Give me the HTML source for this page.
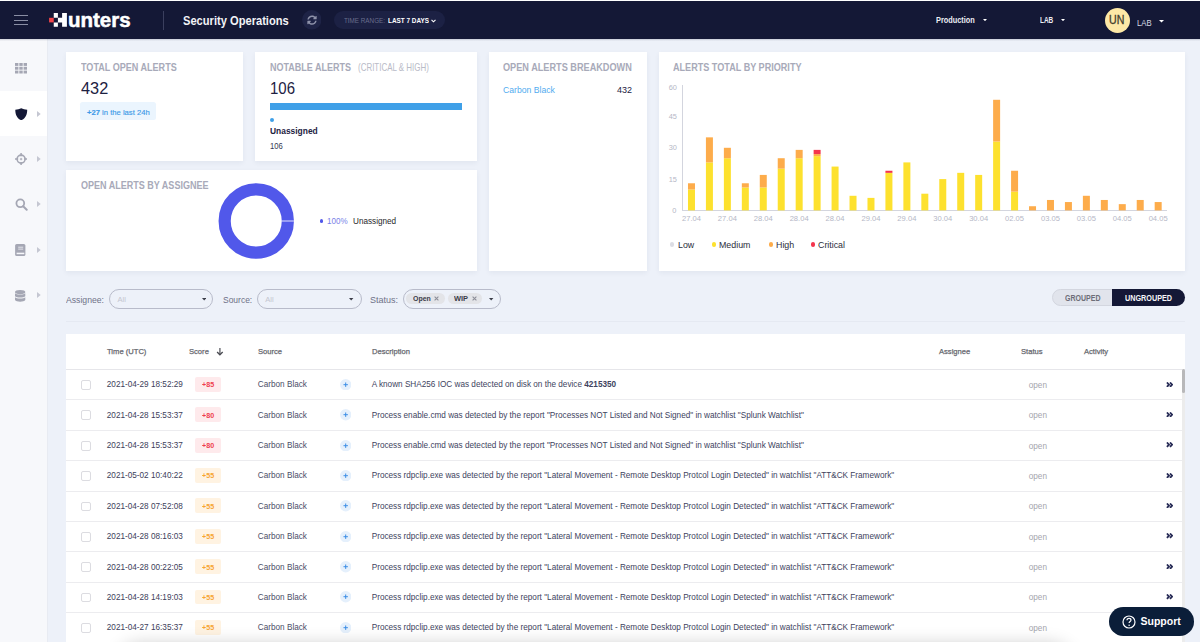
<!DOCTYPE html><html><head><meta charset="utf-8"><style>
*{margin:0;padding:0;box-sizing:border-box}
html,body{width:1200px;height:642px;overflow:hidden;background:#edf1f9;font-family:"Liberation Sans",sans-serif}
.t{position:absolute;white-space:nowrap;line-height:1}
.tb{-webkit-text-stroke:0.15px currentColor}
.a{position:absolute}
.card{position:absolute;background:#fff;box-shadow:0 2px 5px rgba(40,50,90,0.06)}
</style></head><body>
<div class="a" style="left:0;top:0;width:1200px;height:1px;background:#fff"></div>
<div class="a" style="left:0;top:1px;width:1200px;height:37.7px;background:#141836"></div>
<div class="a" style="left:14.3px;top:14.7px;width:14px;height:1.1px;background:#8a8ea4"></div>
<div class="a" style="left:14.3px;top:19.5px;width:14px;height:1.1px;background:#8a8ea4"></div>
<div class="a" style="left:14.3px;top:24.1px;width:14px;height:1.1px;background:#8a8ea4"></div>
<svg class="a" style="left:0;top:0" width="140" height="39" viewBox="0 0 140 39">
<rect x="49.1" y="17.8" width="4.65" height="4.6" fill="#f0444a"/>
<path d="M53.75 13.05 H57.9 V17.8 H53.75 Z M53.75 22.4 H57.9 V26.75 H53.75 Z M57.9 17.8 H62.1 V13.05 H66.9 V26.75 H62.1 V22.4 H57.9 Z" fill="#fff"/>
<text x="68.0" y="26.75" font-family="Liberation Sans" font-weight="bold" font-size="20" fill="#fff" stroke="#fff" stroke-width="0.5" textLength="62.6" lengthAdjust="spacingAndGlyphs">unters</text>
</svg>
<div class="a" style="left:163px;top:11px;width:1px;height:19px;background:#3b3f5e"></div>
<div class="t" style="left:183.2px;top:14px;font-size:13px;color:#f2f3f7;font-weight:bold;transform:scaleX(0.856);transform-origin:0 0;">Security Operations</div>
<svg class="a" style="left:301.9px;top:10.4px" width="19.6" height="19.6" viewBox="0 0 19.6 19.6">
<circle cx="9.8" cy="9.8" r="9.75" fill="#1e2346"/>
<g transform="translate(5.2 5.3) scale(0.0188)"><path fill="#8e92aa" d="M370.72 133.28C339.458 104.008 298.888 87.962 255.848 88c-77.458.068-144.328 53.178-162.791 126.85-1.344 5.363-6.122 9.150-11.651 9.150H24.103c-7.498 0-13.194-6.807-11.807-14.176C33.933 94.924 134.813 8 256 8c66.448 0 126.791 26.136 171.315 68.685L463.030 40.970C478.149 25.851 504 36.559 504 57.941V192c0 13.255-10.745 24-24 24H345.941c-21.382 0-32.090-25.851-16.971-40.971l41.750-41.749zM32 296h134.059c21.382 0 32.090 25.851 16.971 40.971l-41.750 41.750c31.262 29.273 71.835 45.319 114.876 45.280 77.418-.070 144.315-53.144 162.787-126.849 1.344-5.363 6.122-9.150 11.651-9.150h57.304c7.498 0 13.193 6.807 11.807 14.176C478.067 417.076 377.187 504 256 504c-66.448 0-126.791-26.136-171.315-68.685L48.970 471.030C33.851 486.149 8 475.441 8 454.059V320c0-13.255 10.745-24 24-24z"/></g>
</svg>
<div class="a" style="left:334px;top:11px;width:110.5px;height:18px;border-radius:9px;background:#1c2144"></div>
<div class="t" style="left:344px;top:17px;font-size:7.8px;color:#6a6e8c;font-weight:normal;transform:scaleX(0.809);transform-origin:0 0;">TIME RANGE:</div>
<div class="t" style="left:388px;top:17px;font-size:7.8px;color:#ffffff;font-weight:bold;transform:scaleX(0.82);transform-origin:0 0;">LAST 7 DAYS</div>
<svg class="a" style="left:431px;top:18.5px" width="5" height="4" viewBox="0 0 5 4"><path d="M0.5 0.8 L2.5 2.8 L4.5 0.8" fill="none" stroke="#fff" stroke-width="1.1"/></svg>
<div class="t" style="left:935.6px;top:17px;font-size:8.2px;color:#eceef4;font-weight:bold;transform:scaleX(0.897);transform-origin:0 0;">Production</div>
<svg class="a" style="left:982.7px;top:19.3px" width="4" height="2.2" viewBox="0 0 4 2.2"><path d="M0 0 L4 0 L2 2.2 Z" fill="#fff"/></svg>
<div class="t" style="left:1039.7px;top:17px;font-size:8.2px;color:#eceef4;font-weight:bold;transform:scaleX(0.786);transform-origin:0 0;">LAB</div>
<svg class="a" style="left:1061px;top:19.3px" width="4" height="2.2" viewBox="0 0 4 2.2"><path d="M0 0 L4 0 L2 2.2 Z" fill="#fff"/></svg>
<div class="a" style="left:1104.7px;top:7.5px;width:25.4px;height:25.4px;border-radius:50%;background:#fde8a6"></div>
<div class="t" style="left:1108.9px;top:14px;font-size:12px;color:#3f3b2b;font-weight:normal;transform:scaleX(0.886);transform-origin:0 0;-webkit-text-stroke:0.3px #3f3b2b;">UN</div>
<div class="t" style="left:1136.6px;top:18px;font-size:9.8px;color:#d8dae4;font-weight:normal;transform:scaleX(0.791);transform-origin:0 0;">LAB</div>
<svg class="a" style="left:1159px;top:20.2px" width="5" height="2.6" viewBox="0 0 5 2.6"><path d="M0 0 L5 0 L2.5 2.6 Z" fill="#fff"/></svg>
<div class="a" style="left:0;top:38.5px;width:46.5px;height:604px;background:#f7f8fb;box-shadow:1px 0 0 #e8ebf2"></div>
<div class="a" style="left:0;top:90.7px;width:46.5px;height:45.3px;background:#fff"></div>
<div class="a" style="left:0;top:38.7px;width:1200px;height:2px;background:linear-gradient(rgba(20,24,54,0.18),rgba(20,24,54,0))"></div>
<svg class="a" style="left:0;top:0" width="47" height="80"><rect x="15.0" y="63.0" width="3.4" height="2.9" fill="#a5a7b4"/><rect x="19.3" y="63.0" width="3.4" height="2.9" fill="#a5a7b4"/><rect x="23.6" y="63.0" width="3.4" height="2.9" fill="#a5a7b4"/><rect x="15.0" y="66.8" width="3.4" height="2.9" fill="#a5a7b4"/><rect x="19.3" y="66.8" width="3.4" height="2.9" fill="#a5a7b4"/><rect x="23.6" y="66.8" width="3.4" height="2.9" fill="#a5a7b4"/><rect x="15.0" y="70.6" width="3.4" height="2.9" fill="#a5a7b4"/><rect x="19.3" y="70.6" width="3.4" height="2.9" fill="#a5a7b4"/><rect x="23.6" y="70.6" width="3.4" height="2.9" fill="#a5a7b4"/></svg>
<svg class="a" style="left:15px;top:107.9px" width="12.5" height="12.5" viewBox="0 0 12.5 12.5"><path d="M6.25 0.3 C4.5 1.2 2.5 1.6 0.3 1.7 C0.3 6.5 1.8 10.2 6.25 12.3 C10.7 10.2 12.2 6.5 12.2 1.7 C10 1.6 8 1.2 6.25 0.3 Z" fill="#141836"/></svg>
<svg class="a" style="left:37px;top:110.6px" width="4" height="6" viewBox="0 0 4 6"><path d="M0 0 L3.7 3 L0 6 Z" fill="#c5c7d2"/></svg>
<svg class="a" style="left:15px;top:153.2px" width="12.2" height="12.2" viewBox="0 0 12.2 12.2"><circle cx="6.1" cy="6.1" r="4" fill="none" stroke="#a5a7b4" stroke-width="1.6"/><path d="M6.1 0 V3.2 M6.1 9 V12.2 M0 6.1 H3.2 M9 6.1 H12.2" stroke="#a5a7b4" stroke-width="1.5"/><path d="M6.1 4.9 V7.3 M4.9 6.1 H7.3" stroke="#a5a7b4" stroke-width="0.9"/></svg>
<svg class="a" style="left:37px;top:156px" width="4" height="6" viewBox="0 0 4 6"><path d="M0 0 L3.7 3 L0 6 Z" fill="#c5c7d2"/></svg>
<svg class="a" style="left:15px;top:198px" width="13" height="13" viewBox="0 0 13 13"><circle cx="5.3" cy="5.3" r="3.9" fill="none" stroke="#a5a7b4" stroke-width="1.8"/><path d="M8.2 8.2 L11.7 11.7" stroke="#a5a7b4" stroke-width="2" stroke-linecap="round"/></svg>
<svg class="a" style="left:37px;top:201.2px" width="4" height="6" viewBox="0 0 4 6"><path d="M0 0 L3.7 3 L0 6 Z" fill="#c5c7d2"/></svg>
<svg class="a" style="left:15px;top:244.3px" width="11" height="12.2" viewBox="0 0 11 12.2"><rect x="0.1" y="0" width="10.3" height="12" rx="1.6" fill="#a5a7b4"/><rect x="3.2" y="2.7" width="5" height="1" fill="#e4e5ec"/><rect x="3.2" y="4.6" width="5" height="1" fill="#e4e5ec"/><rect x="1.6" y="8.7" width="7.7" height="1.5" fill="#f7f8fb"/></svg>
<svg class="a" style="left:37px;top:246.5px" width="4" height="6" viewBox="0 0 4 6"><path d="M0 0 L3.7 3 L0 6 Z" fill="#c5c7d2"/></svg>
<svg class="a" style="left:15px;top:289.5px" width="11" height="12.2" viewBox="0 0 11 12.2"><ellipse cx="5.15" cy="2.1" rx="5.15" ry="2.1" fill="#a5a7b4"/><path d="M0 3.3 C1.2 5 9.1 5 10.3 3.3 V6.2 C9.1 7.9 1.2 7.9 0 6.2 Z" fill="#a5a7b4"/><path d="M0 7.3 C1.2 9 9.1 9 10.3 7.3 V10.1 C9.1 12.2 1.2 12.2 0 10.1 Z" fill="#a5a7b4"/></svg>
<svg class="a" style="left:37px;top:292px" width="4" height="6" viewBox="0 0 4 6"><path d="M0 0 L3.7 3 L0 6 Z" fill="#c5c7d2"/></svg>
<div class="card" style="left:66px;top:51.7px;width:177px;height:109.3px"></div>
<div class="card" style="left:255px;top:51.7px;width:222px;height:109.3px"></div>
<div class="card" style="left:66px;top:170px;width:411px;height:101px"></div>
<div class="card" style="left:489px;top:51.7px;width:158px;height:219.3px"></div>
<div class="card" style="left:659px;top:51.7px;width:526px;height:219.3px"></div>
<div class="t" style="left:80.9px;top:63px;font-size:10.3px;color:#a8aab9;font-weight:bold;transform:scaleX(0.879);transform-origin:0 0;">TOTAL OPEN ALERTS</div>
<div class="t" style="left:80.9px;top:80px;font-size:17px;color:#1d2142;font-weight:normal;transform:scaleX(0.959);transform-origin:0 0;">432</div>
<div class="a" style="left:80.4px;top:102.4px;width:75.7px;height:17.8px;border-radius:2.5px;background:#ebf5fe"></div>
<div class="t" style="left:86.9px;top:109px;font-size:7.8px;color:#3e9ae8;font-weight:normal;transform:scaleX(0.98);transform-origin:0 0;-webkit-text-stroke:0.15px #3e9ae8;"><b>+27</b> in the last 24h</div>
<div class="t" style="left:270px;top:63px;font-size:10.3px;color:#a8aab9;font-weight:bold;transform:scaleX(0.874);transform-origin:0 0;">NOTABLE ALERTS</div>
<div class="t" style="left:358px;top:63px;font-size:10.3px;color:#b9bbc7;font-weight:normal;transform:scaleX(0.773);transform-origin:0 0;">(CRITICAL &amp; HIGH)</div>
<div class="t" style="left:270px;top:80px;font-size:16.5px;color:#1d2142;font-weight:normal;transform:scaleX(0.908);transform-origin:0 0;">106</div>
<div class="a" style="left:270px;top:102.8px;width:192.1px;height:7px;background:#3fa0e8"></div>
<div class="a" style="left:270px;top:117.7px;width:4.2px;height:4.2px;border-radius:50%;background:#3fa0e8"></div>
<div class="t" style="left:270px;top:127px;font-size:9.2px;color:#1d2142;font-weight:bold;transform:scaleX(0.916);transform-origin:0 0;">Unassigned</div>
<div class="t" style="left:270px;top:142px;font-size:9px;color:#333650;font-weight:normal;transform:scaleX(0.849);transform-origin:0 0;">106</div>
<div class="t" style="left:80.5px;top:181px;font-size:10.3px;color:#a8aab9;font-weight:bold;transform:scaleX(0.876);transform-origin:0 0;">OPEN ALERTS BY ASSIGNEE</div>
<svg class="a" style="left:216px;top:181px" width="80" height="80" viewBox="0 0 80 80"><circle cx="40.25" cy="40" r="31.6" fill="none" stroke="#5158ea" stroke-width="12.2"/><rect x="65" y="39.5" width="13" height="1" fill="#dfe0fb"/></svg>
<div class="a" style="left:320px;top:219.3px;width:3.4px;height:3.4px;border-radius:50%;background:#5158ea"></div>
<div class="t" style="left:327px;top:217px;font-size:9px;color:#7a7fe8;font-weight:normal;transform:scaleX(0.895);transform-origin:0 0;">100%</div>
<div class="t" style="left:352.7px;top:217px;font-size:9px;color:#1f1f2a;font-weight:normal;transform:scaleX(0.907);transform-origin:0 0;">Unassigned</div>
<div class="t" style="left:503.1px;top:63px;font-size:10.3px;color:#a8aab9;font-weight:bold;transform:scaleX(0.889);transform-origin:0 0;">OPEN ALERTS BREAKDOWN</div>
<div class="t" style="left:503.1px;top:86px;font-size:9px;color:#52acef;font-weight:normal;transform:scaleX(0.96);transform-origin:0 0;">Carbon Black</div>
<div class="t" style="left:616.9px;top:86px;font-size:9px;color:#1d2142;font-weight:normal;">432</div>
<div class="t" style="left:673.4px;top:63px;font-size:10.3px;color:#a8aab9;font-weight:bold;transform:scaleX(0.882);transform-origin:0 0;">ALERTS TOTAL BY PRIORITY</div>
<div class="a" style="left:682px;top:84.7px;width:1px;height:126.3px;background:#d3d5de"></div>
<div class="a" style="left:682px;top:210.1px;width:485.2px;height:1.1px;background:#d3d5de"></div>
<div class="t" style="left:672.3px;top:207px;font-size:7.4px;color:#b5b7c6;font-weight:normal;">0</div>
<div class="t" style="left:668.7px;top:176px;font-size:7.4px;color:#b5b7c6;font-weight:normal;">15</div>
<div class="t" style="left:668.7px;top:144px;font-size:7.4px;color:#b5b7c6;font-weight:normal;">30</div>
<div class="t" style="left:668.7px;top:113px;font-size:7.4px;color:#b5b7c6;font-weight:normal;">45</div>
<div class="t" style="left:668.7px;top:84px;font-size:7.4px;color:#b5b7c6;font-weight:normal;">60</div>
<svg class="a" style="left:650px;top:80px" width="530" height="135"><rect x="37.98" y="109.53" width="7" height="20.87" fill="#fde12e"/><rect x="37.98" y="103.27" width="7" height="6.26" fill="#fdac4b"/><rect x="55.92" y="82.40" width="7" height="48.00" fill="#fde12e"/><rect x="55.92" y="57.35" width="7" height="25.04" fill="#fdac4b"/><rect x="73.88" y="78.22" width="7" height="52.18" fill="#fde12e"/><rect x="73.88" y="67.79" width="7" height="10.44" fill="#fdac4b"/><rect x="91.83" y="107.44" width="7" height="22.96" fill="#fde12e"/><rect x="91.83" y="103.27" width="7" height="4.17" fill="#fdac4b"/><rect x="109.77" y="107.44" width="7" height="22.96" fill="#fde12e"/><rect x="109.77" y="94.92" width="7" height="12.52" fill="#fdac4b"/><rect x="127.73" y="88.66" width="7" height="41.74" fill="#fde12e"/><rect x="127.73" y="78.22" width="7" height="10.44" fill="#fdac4b"/><rect x="145.67" y="78.22" width="7" height="52.18" fill="#fde12e"/><rect x="145.67" y="69.88" width="7" height="8.35" fill="#fdac4b"/><rect x="163.62" y="76.14" width="7" height="54.26" fill="#fde12e"/><rect x="163.62" y="74.05" width="7" height="2.09" fill="#fdac4b"/><rect x="163.62" y="69.88" width="7" height="4.17" fill="#f4354d"/><rect x="181.58" y="86.57" width="7" height="43.83" fill="#fde12e"/><rect x="199.52" y="115.79" width="7" height="14.61" fill="#fde12e"/><rect x="217.48" y="117.88" width="7" height="12.52" fill="#fde12e"/><rect x="235.42" y="92.83" width="7" height="37.57" fill="#fde12e"/><rect x="235.42" y="90.75" width="7" height="2.09" fill="#f4354d"/><rect x="253.38" y="82.40" width="7" height="48.00" fill="#fde12e"/><rect x="271.33" y="113.70" width="7" height="16.70" fill="#fde12e"/><rect x="289.27" y="99.09" width="7" height="31.31" fill="#fde12e"/><rect x="307.22" y="92.83" width="7" height="37.57" fill="#fde12e"/><rect x="325.17" y="94.92" width="7" height="35.48" fill="#fde12e"/><rect x="343.12" y="61.53" width="7" height="68.87" fill="#fde12e"/><rect x="343.12" y="19.79" width="7" height="41.74" fill="#fdac4b"/><rect x="361.08" y="111.62" width="7" height="18.78" fill="#fde12e"/><rect x="361.08" y="90.75" width="7" height="20.87" fill="#fdac4b"/><rect x="379.03" y="126.23" width="7" height="4.17" fill="#fdac4b"/><rect x="396.97" y="119.97" width="7" height="10.44" fill="#fdac4b"/><rect x="414.92" y="122.05" width="7" height="8.35" fill="#fdac4b"/><rect x="432.88" y="115.79" width="7" height="14.61" fill="#fdac4b"/><rect x="450.83" y="119.97" width="7" height="10.44" fill="#fdac4b"/><rect x="468.78" y="124.14" width="7" height="6.26" fill="#fdac4b"/><rect x="486.72" y="119.97" width="7" height="10.44" fill="#fdac4b"/><rect x="504.67" y="122.05" width="7" height="8.35" fill="#fdac4b"/></svg>
<div class="t" style="left:671.48px;width:40px;text-align:center;top:215.18px;font-size:7.6px;color:#b5b7c6">27.04</div>
<div class="t" style="left:707.38px;width:40px;text-align:center;top:215.18px;font-size:7.6px;color:#b5b7c6">27.04</div>
<div class="t" style="left:743.27px;width:40px;text-align:center;top:215.18px;font-size:7.6px;color:#b5b7c6">28.04</div>
<div class="t" style="left:779.17px;width:40px;text-align:center;top:215.18px;font-size:7.6px;color:#b5b7c6">28.04</div>
<div class="t" style="left:815.08px;width:40px;text-align:center;top:215.18px;font-size:7.6px;color:#b5b7c6">28.04</div>
<div class="t" style="left:850.98px;width:40px;text-align:center;top:215.18px;font-size:7.6px;color:#b5b7c6">29.04</div>
<div class="t" style="left:886.88px;width:40px;text-align:center;top:215.18px;font-size:7.6px;color:#b5b7c6">29.04</div>
<div class="t" style="left:922.77px;width:40px;text-align:center;top:215.18px;font-size:7.6px;color:#b5b7c6">30.04</div>
<div class="t" style="left:958.67px;width:40px;text-align:center;top:215.18px;font-size:7.6px;color:#b5b7c6">30.04</div>
<div class="t" style="left:994.58px;width:40px;text-align:center;top:215.18px;font-size:7.6px;color:#b5b7c6">02.05</div>
<div class="t" style="left:1030.47px;width:40px;text-align:center;top:215.18px;font-size:7.6px;color:#b5b7c6">03.05</div>
<div class="t" style="left:1066.38px;width:40px;text-align:center;top:215.18px;font-size:7.6px;color:#b5b7c6">03.05</div>
<div class="t" style="left:1102.28px;width:40px;text-align:center;top:215.18px;font-size:7.6px;color:#b5b7c6">04.05</div>
<div class="t" style="left:1138.17px;width:40px;text-align:center;top:215.18px;font-size:7.6px;color:#b5b7c6">04.05</div>
<div class="a" style="left:670.2px;top:242.4px;width:4.2px;height:4.2px;border-radius:50%;background:#dcdde4"></div>
<div class="t" style="left:677.5px;top:241px;font-size:9.3px;color:#2b2d3a;font-weight:normal;transform:scaleX(0.95);transform-origin:0 0;">Low</div>
<div class="a" style="left:711.5px;top:242.4px;width:4.2px;height:4.2px;border-radius:50%;background:#fde12e"></div>
<div class="t" style="left:718.7px;top:241px;font-size:9.3px;color:#2b2d3a;font-weight:normal;transform:scaleX(0.95);transform-origin:0 0;">Medium</div>
<div class="a" style="left:768.5px;top:242.4px;width:4.2px;height:4.2px;border-radius:50%;background:#fdac4b"></div>
<div class="t" style="left:775.5px;top:241px;font-size:9.3px;color:#2b2d3a;font-weight:normal;transform:scaleX(0.95);transform-origin:0 0;">High</div>
<div class="a" style="left:811.2px;top:242.4px;width:4.2px;height:4.2px;border-radius:50%;background:#f4354d"></div>
<div class="t" style="left:818.3px;top:241px;font-size:9.3px;color:#2b2d3a;font-weight:normal;transform:scaleX(0.95);transform-origin:0 0;">Critical</div>
<div class="t" style="left:66.2px;top:295px;font-size:9.8px;color:#6f7288;font-weight:normal;transform:scaleX(0.883);transform-origin:0 0;">Assignee:</div>
<div class="a" style="left:109.2px;top:289px;width:104.10000000000001px;height:19.7px;border:1px solid #b8bbca;border-radius:10px"></div>
<div class="t" style="left:117.5px;top:296px;font-size:7.6px;color:#c4c6d0;font-weight:normal;">All</div>
<svg class="a" style="left:201.6px;top:298.3px" width="4.4" height="2.4" viewBox="0 0 4.4 2.4"><path d="M0 0 H4.4 L2.2 2.4 Z" fill="#3a3c48"/></svg>
<div class="t" style="left:222.5px;top:295px;font-size:9.8px;color:#6f7288;font-weight:normal;transform:scaleX(0.865);transform-origin:0 0;">Source:</div>
<div class="a" style="left:256.5px;top:289px;width:105.10000000000002px;height:19.7px;border:1px solid #b8bbca;border-radius:10px"></div>
<div class="t" style="left:265.2px;top:296px;font-size:7.6px;color:#c4c6d0;font-weight:normal;">All</div>
<svg class="a" style="left:349.2px;top:298.3px" width="4.4" height="2.4" viewBox="0 0 4.4 2.4"><path d="M0 0 H4.4 L2.2 2.4 Z" fill="#3a3c48"/></svg>
<div class="t" style="left:370.3px;top:295px;font-size:9.8px;color:#6f7288;font-weight:normal;transform:scaleX(0.921);transform-origin:0 0;">Status:</div>
<div class="a" style="left:402.8px;top:289px;width:98.19999999999999px;height:19.7px;border:1px solid #b8bbca;border-radius:10px"></div>
<div class="a" style="left:406.4px;top:293.3px;width:38.6px;height:11px;border-radius:5.5px;background:#e3e4e8"></div>
<div class="a" style="left:448.3px;top:293.3px;width:33.5px;height:11px;border-radius:5.5px;background:#e3e4e8"></div>
<div class="t" style="left:412.5px;top:295px;font-size:7.8px;color:#3a3c48;font-weight:bold;transform:scaleX(0.893);transform-origin:0 0;">Open</div>
<div class="t" style="left:453.7px;top:295px;font-size:7.8px;color:#3a3c48;font-weight:bold;transform:scaleX(0.957);transform-origin:0 0;">WIP</div>
<svg class="a" style="left:434.2px;top:296.4px" width="5" height="5" viewBox="0 0 5 5"><path d="M0.6 0.6 L4.4 4.4 M4.4 0.6 L0.6 4.4" stroke="#8d8f99" stroke-width="1.1"/></svg>
<svg class="a" style="left:471.5px;top:296.4px" width="5" height="5" viewBox="0 0 5 5"><path d="M0.6 0.6 L4.4 4.4 M4.4 0.6 L0.6 4.4" stroke="#8d8f99" stroke-width="1.1"/></svg>
<svg class="a" style="left:489.4px;top:298.3px" width="4.4" height="2.4" viewBox="0 0 4.4 2.4"><path d="M0 0 H4.4 L2.2 2.4 Z" fill="#3a3c48"/></svg>
<div class="a" style="left:1051.9px;top:288.9px;width:133.1px;height:17.5px;border-radius:8.75px;background:#e1e4ec;border:1px solid #d3d6df"></div>
<div class="a" style="left:1112.2px;top:288.9px;width:72.8px;height:17.5px;border-radius:0 8.75px 8.75px 0;background:#141836"></div>
<div class="t" style="left:1064.75px;top:294px;font-size:8.3px;color:#6d6e78;font-weight:bold;transform:scaleX(0.846);transform-origin:0 0;">GROUPED</div>
<div class="t" style="left:1125px;top:294px;font-size:8.3px;color:#f4f5f8;font-weight:bold;transform:scaleX(0.873);transform-origin:0 0;">UNGROUPED</div>
<div class="a" style="left:66px;top:321.3px;width:1119px;height:1.2px;background:#e5e9f2"></div>
<div class="a" style="left:66px;top:333.7px;width:1119px;height:310px;background:#fff"></div>
<div class="t" style="left:106.8px;top:348px;font-size:8px;color:#66676e;font-weight:normal;transform:scaleX(0.95);transform-origin:0 0;-webkit-text-stroke:0.25px #66676e;">Time (UTC)</div>
<div class="t" style="left:188.8px;top:348px;font-size:8px;color:#66676e;font-weight:normal;transform:scaleX(0.95);transform-origin:0 0;-webkit-text-stroke:0.25px #66676e;">Score</div>
<div class="t" style="left:257.8px;top:348px;font-size:8px;color:#66676e;font-weight:normal;transform:scaleX(0.95);transform-origin:0 0;-webkit-text-stroke:0.25px #66676e;">Source</div>
<div class="t" style="left:371.7px;top:348px;font-size:8px;color:#66676e;font-weight:normal;transform:scaleX(0.95);transform-origin:0 0;-webkit-text-stroke:0.25px #66676e;">Description</div>
<div class="t" style="left:938.75px;top:348px;font-size:8px;color:#66676e;font-weight:normal;transform:scaleX(0.95);transform-origin:0 0;-webkit-text-stroke:0.25px #66676e;">Assignee</div>
<div class="t" style="left:1020.5px;top:348px;font-size:8px;color:#66676e;font-weight:normal;transform:scaleX(0.95);transform-origin:0 0;-webkit-text-stroke:0.25px #66676e;">Status</div>
<div class="t" style="left:1083.75px;top:348px;font-size:8px;color:#66676e;font-weight:normal;transform:scaleX(0.95);transform-origin:0 0;-webkit-text-stroke:0.25px #66676e;">Activity</div>
<svg class="a" style="left:216.4px;top:347.9px" width="7.8" height="8" viewBox="0 0 7.8 8"><path d="M3.9 0 V6.6" fill="none" stroke="#7a7b80" stroke-width="1.6"/><path d="M1.1 4.0 L3.9 6.8 L6.7 4.0" fill="none" stroke="#4a4b52" stroke-width="1.3"/></svg>
<div class="a" style="left:66px;top:368.7px;width:1116px;height:1px;background:#e6e6ea"></div>
<div class="a" style="left:81.3px;top:380.10px;width:10px;height:9.8px;border:1px solid #dcdce1;border-radius:2px;background:#fff"></div>
<div class="t" style="left:106.8px;top:381px;font-size:8.2px;color:#3d405a;font-weight:normal;">2021-04-29 18:52:29</div>
<div class="a" style="left:194.8px;top:377.00px;width:26.2px;height:14.8px;border-radius:2px;background:#feeaec"></div>
<div class="t" style="left:201.8px;top:382px;font-size:6.8px;color:#ef3f4f;font-weight:bold;transform:scaleX(1.05);transform-origin:0 0;">+85</div>
<div class="t" style="left:257.8px;top:381px;font-size:8.2px;color:#4b4e68;font-weight:normal;">Carbon Black</div>
<svg class="a" style="left:340px;top:378.90px" width="11.4" height="11.4" viewBox="0 0 11.4 11.4"><circle cx="5.7" cy="5.7" r="5.7" fill="#e5f0fc"/><path d="M5.7 3.5 V7.9 M3.5 5.7 H7.9" stroke="#3a8ee6" stroke-width="1"/></svg>
<div class="t" style="left:371.7px;top:381px;font-size:8.2px;color:#40435e;font-weight:normal;">A known SHA256 IOC was detected on disk on the device <b>4215350</b></div>
<div class="t" style="left:1028.75px;top:382px;font-size:8.2px;color:#a4a5ad;font-weight:normal;">open</div>
<svg class="a" style="left:1165.6px;top:381.60px" width="7" height="5.4" viewBox="0 0 7 5.4"><path d="M0.9 0.5 L3.0 2.7 L0.9 4.9 M4.0 0.5 L6.1 2.7 L4.0 4.9" fill="none" stroke="#262a55" stroke-width="1.8"/></svg>
<div class="a" style="left:66px;top:399.47px;width:1116px;height:1px;background:#ececef"></div>
<div class="a" style="left:81.3px;top:410.47px;width:10px;height:9.8px;border:1px solid #dcdce1;border-radius:2px;background:#fff"></div>
<div class="t" style="left:106.8px;top:412px;font-size:8.2px;color:#3d405a;font-weight:normal;">2021-04-28 15:53:37</div>
<div class="a" style="left:194.8px;top:407.37px;width:26.2px;height:14.8px;border-radius:2px;background:#feeaec"></div>
<div class="t" style="left:201.8px;top:413px;font-size:6.8px;color:#ef3f4f;font-weight:bold;transform:scaleX(1.05);transform-origin:0 0;">+80</div>
<div class="t" style="left:257.8px;top:412px;font-size:8.2px;color:#4b4e68;font-weight:normal;">Carbon Black</div>
<svg class="a" style="left:340px;top:409.27px" width="11.4" height="11.4" viewBox="0 0 11.4 11.4"><circle cx="5.7" cy="5.7" r="5.7" fill="#e5f0fc"/><path d="M5.7 3.5 V7.9 M3.5 5.7 H7.9" stroke="#3a8ee6" stroke-width="1"/></svg>
<div class="t" style="left:371.7px;top:412px;font-size:8.2px;color:#40435e;font-weight:normal;">Process enable.cmd was detected by the report "Processes NOT Listed and Not Signed" in watchlist "Splunk Watchlist"</div>
<div class="t" style="left:1028.75px;top:412px;font-size:8.2px;color:#a4a5ad;font-weight:normal;">open</div>
<svg class="a" style="left:1165.6px;top:411.97px" width="7" height="5.4" viewBox="0 0 7 5.4"><path d="M0.9 0.5 L3.0 2.7 L0.9 4.9 M4.0 0.5 L6.1 2.7 L4.0 4.9" fill="none" stroke="#262a55" stroke-width="1.8"/></svg>
<div class="a" style="left:66px;top:429.84px;width:1116px;height:1px;background:#ececef"></div>
<div class="a" style="left:81.3px;top:440.84px;width:10px;height:9.8px;border:1px solid #dcdce1;border-radius:2px;background:#fff"></div>
<div class="t" style="left:106.8px;top:442px;font-size:8.2px;color:#3d405a;font-weight:normal;">2021-04-28 15:53:37</div>
<div class="a" style="left:194.8px;top:437.74px;width:26.2px;height:14.8px;border-radius:2px;background:#feeaec"></div>
<div class="t" style="left:201.8px;top:443px;font-size:6.8px;color:#ef3f4f;font-weight:bold;transform:scaleX(1.05);transform-origin:0 0;">+80</div>
<div class="t" style="left:257.8px;top:442px;font-size:8.2px;color:#4b4e68;font-weight:normal;">Carbon Black</div>
<svg class="a" style="left:340px;top:439.64px" width="11.4" height="11.4" viewBox="0 0 11.4 11.4"><circle cx="5.7" cy="5.7" r="5.7" fill="#e5f0fc"/><path d="M5.7 3.5 V7.9 M3.5 5.7 H7.9" stroke="#3a8ee6" stroke-width="1"/></svg>
<div class="t" style="left:371.7px;top:442px;font-size:8.2px;color:#40435e;font-weight:normal;">Process enable.cmd was detected by the report "Processes NOT Listed and Not Signed" in watchlist "Splunk Watchlist"</div>
<div class="t" style="left:1028.75px;top:443px;font-size:8.2px;color:#a4a5ad;font-weight:normal;">open</div>
<svg class="a" style="left:1165.6px;top:442.34px" width="7" height="5.4" viewBox="0 0 7 5.4"><path d="M0.9 0.5 L3.0 2.7 L0.9 4.9 M4.0 0.5 L6.1 2.7 L4.0 4.9" fill="none" stroke="#262a55" stroke-width="1.8"/></svg>
<div class="a" style="left:66px;top:460.21px;width:1116px;height:1px;background:#ececef"></div>
<div class="a" style="left:81.3px;top:471.21px;width:10px;height:9.8px;border:1px solid #dcdce1;border-radius:2px;background:#fff"></div>
<div class="t" style="left:106.8px;top:472px;font-size:8.2px;color:#3d405a;font-weight:normal;">2021-05-02 10:40:22</div>
<div class="a" style="left:194.8px;top:468.11px;width:26.2px;height:14.8px;border-radius:2px;background:#fff3e2"></div>
<div class="t" style="left:201.8px;top:473px;font-size:6.8px;color:#f7a532;font-weight:bold;transform:scaleX(1.05);transform-origin:0 0;">+55</div>
<div class="t" style="left:257.8px;top:472px;font-size:8.2px;color:#4b4e68;font-weight:normal;">Carbon Black</div>
<svg class="a" style="left:340px;top:470.01px" width="11.4" height="11.4" viewBox="0 0 11.4 11.4"><circle cx="5.7" cy="5.7" r="5.7" fill="#e5f0fc"/><path d="M5.7 3.5 V7.9 M3.5 5.7 H7.9" stroke="#3a8ee6" stroke-width="1"/></svg>
<div class="t" style="left:371.7px;top:472px;font-size:8.2px;color:#40435e;font-weight:normal;">Process rdpclip.exe was detected by the report "Lateral Movement - Remote Desktop Protcol Login Detected" in watchlist "ATT&amp;CK Framework"</div>
<div class="t" style="left:1028.75px;top:473px;font-size:8.2px;color:#a4a5ad;font-weight:normal;">open</div>
<svg class="a" style="left:1165.6px;top:472.71px" width="7" height="5.4" viewBox="0 0 7 5.4"><path d="M0.9 0.5 L3.0 2.7 L0.9 4.9 M4.0 0.5 L6.1 2.7 L4.0 4.9" fill="none" stroke="#262a55" stroke-width="1.8"/></svg>
<div class="a" style="left:66px;top:490.58px;width:1116px;height:1px;background:#ececef"></div>
<div class="a" style="left:81.3px;top:501.58px;width:10px;height:9.8px;border:1px solid #dcdce1;border-radius:2px;background:#fff"></div>
<div class="t" style="left:106.8px;top:503px;font-size:8.2px;color:#3d405a;font-weight:normal;">2021-04-28 07:52:08</div>
<div class="a" style="left:194.8px;top:498.48px;width:26.2px;height:14.8px;border-radius:2px;background:#fff3e2"></div>
<div class="t" style="left:201.8px;top:504px;font-size:6.8px;color:#f7a532;font-weight:bold;transform:scaleX(1.05);transform-origin:0 0;">+55</div>
<div class="t" style="left:257.8px;top:503px;font-size:8.2px;color:#4b4e68;font-weight:normal;">Carbon Black</div>
<svg class="a" style="left:340px;top:500.38px" width="11.4" height="11.4" viewBox="0 0 11.4 11.4"><circle cx="5.7" cy="5.7" r="5.7" fill="#e5f0fc"/><path d="M5.7 3.5 V7.9 M3.5 5.7 H7.9" stroke="#3a8ee6" stroke-width="1"/></svg>
<div class="t" style="left:371.7px;top:503px;font-size:8.2px;color:#40435e;font-weight:normal;">Process rdpclip.exe was detected by the report "Lateral Movement - Remote Desktop Protcol Login Detected" in watchlist "ATT&amp;CK Framework"</div>
<div class="t" style="left:1028.75px;top:503px;font-size:8.2px;color:#a4a5ad;font-weight:normal;">open</div>
<svg class="a" style="left:1165.6px;top:503.08px" width="7" height="5.4" viewBox="0 0 7 5.4"><path d="M0.9 0.5 L3.0 2.7 L0.9 4.9 M4.0 0.5 L6.1 2.7 L4.0 4.9" fill="none" stroke="#262a55" stroke-width="1.8"/></svg>
<div class="a" style="left:66px;top:520.95px;width:1116px;height:1px;background:#ececef"></div>
<div class="a" style="left:81.3px;top:531.95px;width:10px;height:9.8px;border:1px solid #dcdce1;border-radius:2px;background:#fff"></div>
<div class="t" style="left:106.8px;top:533px;font-size:8.2px;color:#3d405a;font-weight:normal;">2021-04-28 08:16:03</div>
<div class="a" style="left:194.8px;top:528.85px;width:26.2px;height:14.8px;border-radius:2px;background:#fff3e2"></div>
<div class="t" style="left:201.8px;top:534px;font-size:6.8px;color:#f7a532;font-weight:bold;transform:scaleX(1.05);transform-origin:0 0;">+55</div>
<div class="t" style="left:257.8px;top:533px;font-size:8.2px;color:#4b4e68;font-weight:normal;">Carbon Black</div>
<svg class="a" style="left:340px;top:530.75px" width="11.4" height="11.4" viewBox="0 0 11.4 11.4"><circle cx="5.7" cy="5.7" r="5.7" fill="#e5f0fc"/><path d="M5.7 3.5 V7.9 M3.5 5.7 H7.9" stroke="#3a8ee6" stroke-width="1"/></svg>
<div class="t" style="left:371.7px;top:533px;font-size:8.2px;color:#40435e;font-weight:normal;">Process rdpclip.exe was detected by the report "Lateral Movement - Remote Desktop Protcol Login Detected" in watchlist "ATT&amp;CK Framework"</div>
<div class="t" style="left:1028.75px;top:534px;font-size:8.2px;color:#a4a5ad;font-weight:normal;">open</div>
<svg class="a" style="left:1165.6px;top:533.45px" width="7" height="5.4" viewBox="0 0 7 5.4"><path d="M0.9 0.5 L3.0 2.7 L0.9 4.9 M4.0 0.5 L6.1 2.7 L4.0 4.9" fill="none" stroke="#262a55" stroke-width="1.8"/></svg>
<div class="a" style="left:66px;top:551.32px;width:1116px;height:1px;background:#ececef"></div>
<div class="a" style="left:81.3px;top:562.32px;width:10px;height:9.8px;border:1px solid #dcdce1;border-radius:2px;background:#fff"></div>
<div class="t" style="left:106.8px;top:564px;font-size:8.2px;color:#3d405a;font-weight:normal;">2021-04-28 00:22:05</div>
<div class="a" style="left:194.8px;top:559.22px;width:26.2px;height:14.8px;border-radius:2px;background:#fff3e2"></div>
<div class="t" style="left:201.8px;top:565px;font-size:6.8px;color:#f7a532;font-weight:bold;transform:scaleX(1.05);transform-origin:0 0;">+55</div>
<div class="t" style="left:257.8px;top:564px;font-size:8.2px;color:#4b4e68;font-weight:normal;">Carbon Black</div>
<svg class="a" style="left:340px;top:561.12px" width="11.4" height="11.4" viewBox="0 0 11.4 11.4"><circle cx="5.7" cy="5.7" r="5.7" fill="#e5f0fc"/><path d="M5.7 3.5 V7.9 M3.5 5.7 H7.9" stroke="#3a8ee6" stroke-width="1"/></svg>
<div class="t" style="left:371.7px;top:564px;font-size:8.2px;color:#40435e;font-weight:normal;">Process rdpclip.exe was detected by the report "Lateral Movement - Remote Desktop Protcol Login Detected" in watchlist "ATT&amp;CK Framework"</div>
<div class="t" style="left:1028.75px;top:564px;font-size:8.2px;color:#a4a5ad;font-weight:normal;">open</div>
<svg class="a" style="left:1165.6px;top:563.82px" width="7" height="5.4" viewBox="0 0 7 5.4"><path d="M0.9 0.5 L3.0 2.7 L0.9 4.9 M4.0 0.5 L6.1 2.7 L4.0 4.9" fill="none" stroke="#262a55" stroke-width="1.8"/></svg>
<div class="a" style="left:66px;top:581.69px;width:1116px;height:1px;background:#ececef"></div>
<div class="a" style="left:81.3px;top:592.69px;width:10px;height:9.8px;border:1px solid #dcdce1;border-radius:2px;background:#fff"></div>
<div class="t" style="left:106.8px;top:594px;font-size:8.2px;color:#3d405a;font-weight:normal;">2021-04-28 14:19:03</div>
<div class="a" style="left:194.8px;top:589.59px;width:26.2px;height:14.8px;border-radius:2px;background:#fff3e2"></div>
<div class="t" style="left:201.8px;top:595px;font-size:6.8px;color:#f7a532;font-weight:bold;transform:scaleX(1.05);transform-origin:0 0;">+55</div>
<div class="t" style="left:257.8px;top:594px;font-size:8.2px;color:#4b4e68;font-weight:normal;">Carbon Black</div>
<svg class="a" style="left:340px;top:591.49px" width="11.4" height="11.4" viewBox="0 0 11.4 11.4"><circle cx="5.7" cy="5.7" r="5.7" fill="#e5f0fc"/><path d="M5.7 3.5 V7.9 M3.5 5.7 H7.9" stroke="#3a8ee6" stroke-width="1"/></svg>
<div class="t" style="left:371.7px;top:594px;font-size:8.2px;color:#40435e;font-weight:normal;">Process rdpclip.exe was detected by the report "Lateral Movement - Remote Desktop Protcol Login Detected" in watchlist "ATT&amp;CK Framework"</div>
<div class="t" style="left:1028.75px;top:594px;font-size:8.2px;color:#a4a5ad;font-weight:normal;">open</div>
<svg class="a" style="left:1165.6px;top:594.19px" width="7" height="5.4" viewBox="0 0 7 5.4"><path d="M0.9 0.5 L3.0 2.7 L0.9 4.9 M4.0 0.5 L6.1 2.7 L4.0 4.9" fill="none" stroke="#262a55" stroke-width="1.8"/></svg>
<div class="a" style="left:66px;top:612.06px;width:1116px;height:1px;background:#ececef"></div>
<div class="a" style="left:81.3px;top:623.06px;width:10px;height:9.8px;border:1px solid #dcdce1;border-radius:2px;background:#fff"></div>
<div class="t" style="left:106.8px;top:624px;font-size:8.2px;color:#3d405a;font-weight:normal;">2021-04-27 16:35:37</div>
<div class="a" style="left:194.8px;top:619.96px;width:26.2px;height:14.8px;border-radius:2px;background:#fff3e2"></div>
<div class="t" style="left:201.8px;top:625px;font-size:6.8px;color:#f7a532;font-weight:bold;transform:scaleX(1.05);transform-origin:0 0;">+55</div>
<div class="t" style="left:257.8px;top:624px;font-size:8.2px;color:#4b4e68;font-weight:normal;">Carbon Black</div>
<svg class="a" style="left:340px;top:621.86px" width="11.4" height="11.4" viewBox="0 0 11.4 11.4"><circle cx="5.7" cy="5.7" r="5.7" fill="#e5f0fc"/><path d="M5.7 3.5 V7.9 M3.5 5.7 H7.9" stroke="#3a8ee6" stroke-width="1"/></svg>
<div class="t" style="left:371.7px;top:624px;font-size:8.2px;color:#40435e;font-weight:normal;">Process rdpclip.exe was detected by the report "Lateral Movement - Remote Desktop Protcol Login Detected" in watchlist "ATT&amp;CK Framework"</div>
<div class="t" style="left:1028.75px;top:625px;font-size:8.2px;color:#a4a5ad;font-weight:normal;">open</div>
<svg class="a" style="left:1165.6px;top:624.56px" width="7" height="5.4" viewBox="0 0 7 5.4"><path d="M0.9 0.5 L3.0 2.7 L0.9 4.9 M4.0 0.5 L6.1 2.7 L4.0 4.9" fill="none" stroke="#262a55" stroke-width="1.8"/></svg>
<div class="a" style="left:1181.9px;top:369.3px;width:3.1px;height:273px;background:#ececec"></div>
<div class="a" style="left:1181.9px;top:369.3px;width:3.1px;height:24px;border-radius:1.5px;background:#b8b8ba"></div>
<div class="a" style="left:120px;top:647px;width:950px;height:40px;border-radius:20px;background:#fff;box-shadow:0 0 18px 3px rgba(0,0,0,0.2)"></div>
<div class="a" style="left:1108.75px;top:607px;width:85.5px;height:28.5px;border-radius:14.25px;background:#0b1e39"></div>
<svg class="a" style="left:1121.5px;top:614.5px" width="14" height="14" viewBox="0 0 14 14"><circle cx="7" cy="7" r="6" fill="none" stroke="#fff" stroke-width="1.2"/><path d="M5 5.3 C5 3.9 6 3.3 7 3.3 C8.1 3.3 9 4 9 5.1 C9 6.4 7.1 6.6 7.1 8.1" fill="none" stroke="#fff" stroke-width="1.2"/><circle cx="7.1" cy="10.2" r="0.75" fill="#fff"/></svg>
<div class="t" style="left:1140.5px;top:616px;font-size:10.5px;color:#ffffff;font-weight:bold;">Support</div>
</body></html>
